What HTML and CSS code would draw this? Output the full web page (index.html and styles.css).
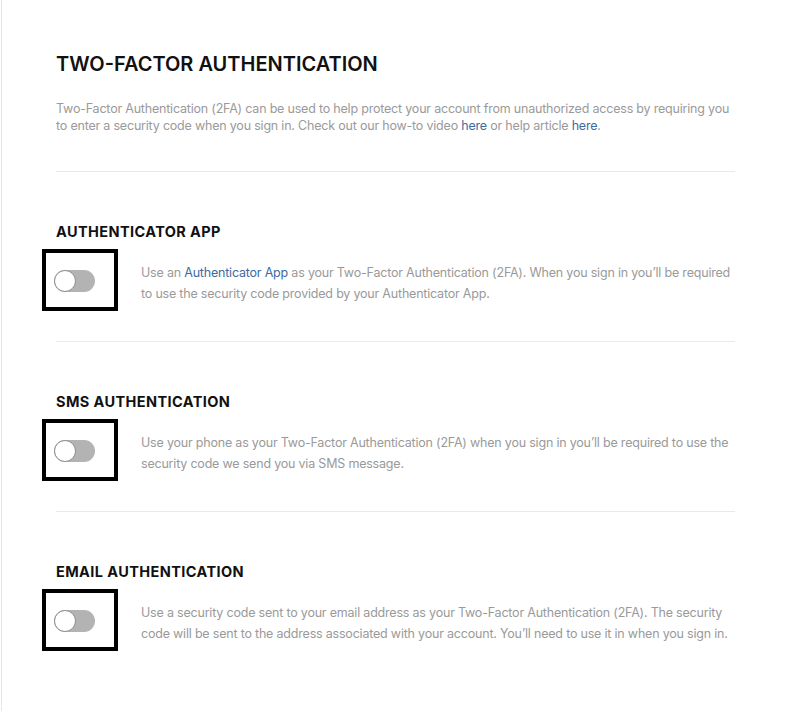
FILE: index.html
```html
<!DOCTYPE html>
<html>
<head>
<meta charset="utf-8">
<link rel="stylesheet" href="styles.css">
</head>
<body>
<div class="page">
  <h1 class="title">TWO-FACTOR AUTHENTICATION</h1>
  <p class="intro">Two-Factor Authentication (2FA) can be used to help protect your account from unauthorized access by requiring you to enter a security code when you sign in. Check out our how-to video <a class="link" href="#">here</a> or help article <a class="link" href="#">here</a>.</p>
  <div class="divider"></div>

  <section class="method">
    <h2 class="method-title">AUTHENTICATOR APP</h2>
    <div class="method-row">
      <div class="highlight"><span class="switch"><span class="knob"></span></span></div>
      <p class="method-text">Use an <a class="link" href="#">Authenticator App</a> as your Two-Factor Authentication (2FA). When you sign in you’ll be required to use the security code provided by your Authenticator App.</p>
    </div>
  </section>
  <div class="divider"></div>

  <section class="method">
    <h2 class="method-title">SMS AUTHENTICATION</h2>
    <div class="method-row">
      <div class="highlight"><span class="switch"><span class="knob"></span></span></div>
      <p class="method-text">Use your phone as your Two-Factor Authentication (2FA) when you sign in you’ll be required to use the security code we send you via SMS message.</p>
    </div>
  </section>
  <div class="divider"></div>

  <section class="method">
    <h2 class="method-title">EMAIL AUTHENTICATION</h2>
    <div class="method-row">
      <div class="highlight"><span class="switch"><span class="knob"></span></span></div>
      <p class="method-text">Use a security code sent to your email address as your Two-Factor Authentication (2FA). The security code will be sent to the address associated with your account. You’ll need to use it in when you sign in.</p>
    </div>
  </section>
</div>
</body>
</html>
```

FILE: styles.css
```css
html, body {
  margin: 0;
  padding: 0;
  background: #ffffff;
}
body {
  font-family: Inter, "Noto Sans", "Liberation Sans", sans-serif;
}
.page {
  margin-left: 1px;
  border-left: 1px solid #e6e6e6;
  min-height: 711px;
  box-sizing: border-box;
  padding: 51px 54px 0 54px;
}
.title {
  margin: 0;
  font-size: 20px;
  line-height: 26px;
  font-weight: 600;
  letter-spacing: 0;
  color: #111;
}
.intro {
  margin: 23px 0 0 0;
  font-size: 12.5px;
  line-height: 17px;
  letter-spacing: -0.2px;
  color: #9a9a9a;
}
.link {
  color: #3e6b9e;
  text-decoration: none;
}
.divider {
  height: 1px;
  background: #e9e9e9;
  margin-top: 37px;
}
.divider + .method ~ .divider {
  margin-top: 0;
}
.method {
  padding-top: 51px;
  padding-bottom: 30px;
}
.method-title {
  margin: 0;
  font-size: 14.5px;
  line-height: 18px;
  font-weight: 700;
  letter-spacing: 0.4px;
  color: #111;
}
.method-row {
  display: flex;
  align-items: center;
  margin-left: -14px;
  margin-top: 8px;
}
.highlight {
  width: 76px;
  height: 62px;
  box-sizing: border-box;
  border: 4px solid #000;
  display: flex;
  align-items: center;
  padding-left: 8px;
  padding-top: 2px;
  flex-shrink: 0;
}
.switch {
  display: block;
  position: relative;
  width: 41px;
  height: 22px;
  border-radius: 11px;
  background: #b3b3b3;
}
.knob {
  position: absolute;
  left: 0;
  top: 0;
  width: 20px;
  height: 20px;
  border-radius: 50%;
  background: #fff;
  border: 1px solid #8f8f8f;
}
.method-text {
  margin: 0 0 0 23px;
  font-size: 12.5px;
  line-height: 21px;
  letter-spacing: -0.2px;
  color: #9a9a9a;
  padding-top: 6px;
}
```
